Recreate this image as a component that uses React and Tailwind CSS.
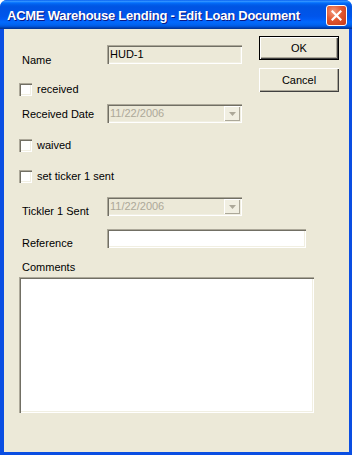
import React from "react";

const sunken =
  "shadow-[inset_1px_1px_0_#ACA899,inset_2px_2px_0_#716F64,inset_-1px_-1px_0_#FFFFFF,inset_-2px_-2px_0_#F1EFE2]";

function Checkbox({ label, className = "" }) {
  return (
    <div className={"flex items-start h-[13px] " + className}>
      <div className={"w-[13px] h-[13px] bg-white shrink-0 " + sunken} />
      <span className="ml-[5px] leading-[13px]">{label}</span>
    </div>
  );
}

function DateCombo() {
  return (
    <div className={"w-[135px] h-[19px] bg-[#ECE9D8] flex items-center pl-[3px] pr-[2px] " + sunken}>
      <span className="flex-1 text-[#ACA899] leading-[13px]">11/22/2006</span>
      <div className="w-[16px] h-[15px] bg-[#F1EFE2] flex items-center justify-center shadow-[inset_1px_1px_0_#FFFFFF,inset_-1px_-1px_0_#ACA899]">
        <svg width="7" height="4" viewBox="0 0 7 4">
          <polygon points="0,0 7,0 3.5,4" fill="#ACA899" />
        </svg>
      </div>
    </div>
  );
}

export default function App() {
  return (
    <div className="w-[353px] h-[456px] bg-white font-['Liberation_Sans',Arial,sans-serif] text-[11px] text-black">
      <div className="w-[352px] h-[455px] flex flex-col rounded-t-[7px] overflow-hidden bg-[#0A4EE2]">
        {/* Title bar */}
        <div className="h-[29px] shrink-0 flex items-start bg-[linear-gradient(to_bottom,#0058EE_0%,#3593FF_4%,#288EFF_6%,#127DFF_8%,#036FFC_10%,#0262EE_14%,#0057E5_20%,#0054E3_24%,#0055EB_56%,#005BF5_66%,#026AFE_76%,#0062EF_86%,#0052D6_92%,#0040AB_96%,#003092_100%)]">
          <span className="ml-[7px] mt-[8px] text-white font-bold text-[13px] leading-[15px] tracking-[-0.25px] [text-shadow:1px_1px_#0A1883] whitespace-nowrap">
            ACME Warehouse Lending - Edit Loan Document
          </span>
          <div className="ml-auto mr-[5px] mt-[5px] w-[21px] h-[21px] rounded-[3px] border border-white bg-[radial-gradient(circle_at_35%_30%,#F39A7E_0%,#E2572F_45%,#C6391A_100%)] flex items-center justify-center">
            <svg width="11" height="11" viewBox="0 0 11 11">
              <path d="M1.5 1.5 L9.5 9.5 M9.5 1.5 L1.5 9.5" stroke="white" strokeWidth="2.2" strokeLinecap="square" />
            </svg>
          </div>
        </div>

        {/* Client area */}
        <div className="ml-[4px] mr-[3px] mb-[3px] flex-1 bg-[#ECE9D8] flex flex-col pl-[15px]">
          {/* Top section */}
          <div className="flex items-start mt-[7px]">
            <div className="w-[223px] flex flex-col">
              <div className="flex mt-[9px] h-[19px]">
                <span className="w-[88px] pl-[3px] pt-[9px] leading-[13px]">Name</span>
                <div className={"w-[135px] h-[19px] bg-[#ECE9D8] flex items-center pl-[3px] " + sunken}>
                  <span className="leading-[13px]">HUD-1</span>
                </div>
              </div>
              <Checkbox label="received" className="mt-[19px]" />
              <div className="flex mt-[8px] h-[19px]">
                <span className="w-[88px] pl-[3px] pt-[4px] leading-[13px] whitespace-nowrap">Received Date</span>
                <DateCombo />
              </div>
            </div>
            <div className="ml-[17px] flex flex-col">
              <button className="w-[80px] h-[24px] border border-black bg-[#ECE9D8] shadow-[inset_1px_1px_0_#FFFFFF,inset_-1px_-1px_0_#404040,inset_-2px_-2px_0_#ACA899] leading-[13px]">
                OK
              </button>
              <button className="mt-[8px] w-[80px] h-[24px] bg-[#ECE9D8] shadow-[inset_1px_1px_0_#FFFFFF,inset_-1px_-1px_0_#404040,inset_-2px_-2px_0_#ACA899] leading-[13px]">
                Cancel
              </button>
            </div>
          </div>

          <Checkbox label="waived" className="mt-[16px]" />
          <Checkbox label="set ticker 1 sent" className="mt-[18px]" />

          <div className="flex mt-[14px] h-[19px]">
            <span className="w-[88px] pl-[3px] pt-[8px] leading-[13px] whitespace-nowrap">Tickler 1 Sent</span>
            <DateCombo />
          </div>

          <div className="flex mt-[13px] h-[19px]">
            <span className="w-[88px] pl-[3px] pt-[8px] leading-[13px]">Reference</span>
            <div className={"w-[199px] h-[19px] bg-white " + sunken} />
          </div>

          <span className="mt-[13px] pl-[3px] leading-[13px]">Comments</span>
          <div className={"mt-[3px] w-[295px] h-[136px] bg-white " + sunken} />
        </div>
      </div>
    </div>
  );
}
